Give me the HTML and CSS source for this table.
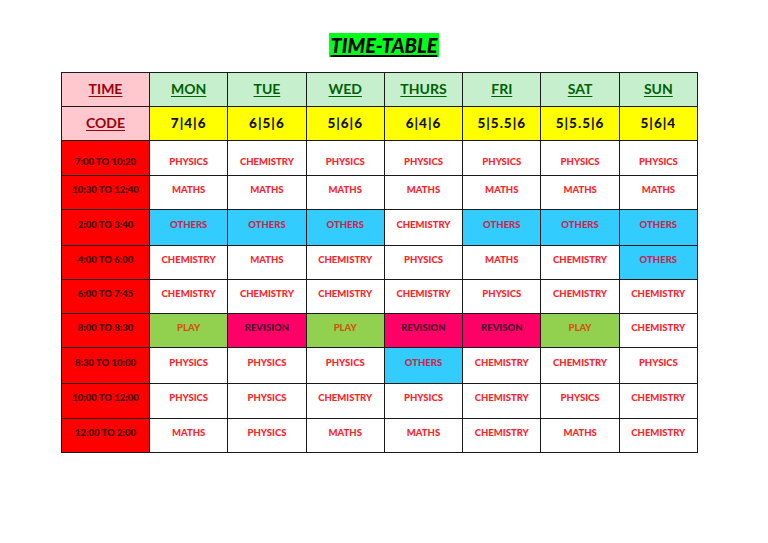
FILE: index.html
```html
<!DOCTYPE html>
<html>
<head>
<meta charset="utf-8">
<link rel="stylesheet" href="styles.css">
</head>
<body>
<div class="page">
  <div class="title-wrap"><h1 class="title">TIME-TABLE</h1></div>
  <div class="tt">
    <div class="c h-pink">TIME</div>
    <div class="c h-green">MON</div>
    <div class="c h-green">TUE</div>
    <div class="c h-green">WED</div>
    <div class="c h-green">THURS</div>
    <div class="c h-green">FRI</div>
    <div class="c h-green">SAT</div>
    <div class="c h-green">SUN</div>

    <div class="c h-pink">CODE</div>
    <div class="c code">7|4|6</div>
    <div class="c code">6|5|6</div>
    <div class="c code">5|6|6</div>
    <div class="c code">6|4|6</div>
    <div class="c code">5|5.5|6</div>
    <div class="c code">5|5.5|6</div>
    <div class="c code">5|6|4</div>

    <div class="c time">7:00 TO 10:20</div>
    <div class="c s">PHYSICS</div><div class="c s">CHEMISTRY</div><div class="c s">PHYSICS</div><div class="c s">PHYSICS</div><div class="c s">PHYSICS</div><div class="c s">PHYSICS</div><div class="c s">PHYSICS</div>

    <div class="c time">10:30 TO 12:40</div>
    <div class="c s">MATHS</div><div class="c s">MATHS</div><div class="c s">MATHS</div><div class="c s">MATHS</div><div class="c s">MATHS</div><div class="c s">MATHS</div><div class="c s">MATHS</div>

    <div class="c time">2:00 TO 3:40</div>
    <div class="c s blue">OTHERS</div><div class="c s blue">OTHERS</div><div class="c s blue">OTHERS</div><div class="c s">CHEMISTRY</div><div class="c s blue">OTHERS</div><div class="c s blue">OTHERS</div><div class="c s blue">OTHERS</div>

    <div class="c time">4:00 TO 6:00</div>
    <div class="c s">CHEMISTRY</div><div class="c s">MATHS</div><div class="c s">CHEMISTRY</div><div class="c s">PHYSICS</div><div class="c s">MATHS</div><div class="c s">CHEMISTRY</div><div class="c s blue">OTHERS</div>

    <div class="c time">6:00 TO 7:45</div>
    <div class="c s">CHEMISTRY</div><div class="c s">CHEMISTRY</div><div class="c s">CHEMISTRY</div><div class="c s">CHEMISTRY</div><div class="c s">PHYSICS</div><div class="c s">CHEMISTRY</div><div class="c s">CHEMISTRY</div>

    <div class="c time">8:00 TO 8:30</div>
    <div class="c s play">PLAY</div><div class="c s rev">REVISION</div><div class="c s play">PLAY</div><div class="c s rev">REVISION</div><div class="c s rev">REVISON</div><div class="c s play">PLAY</div><div class="c s">CHEMISTRY</div>

    <div class="c time">8:30 TO 10:00</div>
    <div class="c s">PHYSICS</div><div class="c s">PHYSICS</div><div class="c s">PHYSICS</div><div class="c s blue">OTHERS</div><div class="c s">CHEMISTRY</div><div class="c s">CHEMISTRY</div><div class="c s">PHYSICS</div>

    <div class="c time">10:00 TO 12:00</div>
    <div class="c s">PHYSICS</div><div class="c s">PHYSICS</div><div class="c s">CHEMISTRY</div><div class="c s">PHYSICS</div><div class="c s">CHEMISTRY</div><div class="c s">PHYSICS</div><div class="c s">CHEMISTRY</div>

    <div class="c time">12:00 TO 2:00</div>
    <div class="c s">MATHS</div><div class="c s">PHYSICS</div><div class="c s">MATHS</div><div class="c s">MATHS</div><div class="c s">CHEMISTRY</div><div class="c s">MATHS</div><div class="c s">CHEMISTRY</div>
  </div>
</div>
</body>
</html>
```

FILE: styles.css
```css
html, body {
  margin: 0;
  padding: 0;
  background: #ffffff;
}
body {
  font-family: Lato, "Liberation Sans", sans-serif;
  width: 768px;
  height: 543px;
  overflow: hidden;
}
.page {
  padding-top: 33px;
}
.title-wrap {
  display: flex;
  justify-content: center;
  height: 24px;
  margin-bottom: 15px;
}
.title {
  margin: 0;
  background: #00ff1a;
  color: #000;
  font-size: 20px;
  font-weight: 900;
  font-style: italic;
  text-decoration: underline;
  text-decoration-thickness: 2px;
  text-underline-offset: 2px;
  line-height: 24px;
  padding: 0 2px;
}
.tt {
  margin-left: 61px;
  width: 637px;
  display: grid;
  grid-template-columns: 88px repeat(7, 1fr);
  grid-template-rows: 34px 34px 35px 34px 36px 34px 34px 34px 36px 35px 34px;
  border-top: 1px solid #1a1a1a;
  border-left: 1px solid #1a1a1a;
  box-sizing: border-box;
}
.c {
  border-right: 1px solid #1a1a1a;
  border-bottom: 1px solid #1a1a1a;
  display: flex;
  align-items: center;
  justify-content: center;
  font-weight: 700;
  white-space: nowrap;
  box-sizing: border-box;
}
/* first data row: text sits a little low */
.c:nth-child(n+17):nth-child(-n+24) {
  padding-top: 7px;
}
/* remaining data rows: text sits a little high */
.c:nth-child(n+25) {
  padding-bottom: 7px;
}
.h-pink {
  background: #ffc7ce;
  color: #9c0006;
  font-size: 14px;
  text-decoration: underline;
  text-underline-offset: 2px;
  padding-bottom: 2px;
}
.h-green {
  background: #c6efce;
  color: #006100;
  font-size: 14px;
  text-decoration: underline;
  text-underline-offset: 2px;
  padding-bottom: 2px;
}
.code {
  background: #ffff00;
  color: #111;
  font-size: 13.5px;
  font-weight: 900;
  letter-spacing: 1px;
  padding-bottom: 2px;
}
.time {
  background: #ff0000;
  color: #3a0000;
  font-size: 9.5px;
  font-weight: 900;
}
.s {
  background: #fff;
  color: #ff2229;
  font-size: 9.5px;
  font-weight: 900;
}
.s.blue {
  background: #33ccff;
  color: #c7284a;
}
.s.play {
  background: #92d050;
  color: #d2520f;
}
.s.rev {
  background: #ff0066;
  color: #4a0032;
}
```
